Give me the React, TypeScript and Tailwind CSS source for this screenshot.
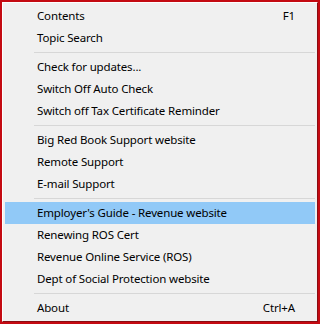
const groups: { label: string; shortcut?: string; active?: boolean }[][] = [
  [{ label: 'Contents', shortcut: 'F1' }, { label: 'Topic Search' }],
  [
    { label: 'Check for updates...' },
    { label: 'Switch Off Auto Check' },
    { label: 'Switch off Tax Certificate Reminder' },
  ],
  [
    { label: 'Big Red Book Support website' },
    { label: 'Remote Support' },
    { label: 'E-mail Support' },
  ],
  [
    { label: "Employer's Guide - Revenue website", active: true },
    { label: 'Renewing ROS Cert' },
    { label: 'Revenue Online Service (ROS)' },
    { label: 'Dept of Social Protection website' },
  ],
  [{ label: 'About', shortcut: 'Ctrl+A' }],
];

export default function App() {
  return (
    <div className="w-[320px] h-[324px] bg-[#c40a12] p-[2px]">
      <div className="h-full border-l border-t border-white border-r border-b border-r-[#8a0d12] border-b-[#8a0d12] bg-[#f0f0f0] px-[2px] pt-[2px] font-['Noto_Sans',sans-serif] text-[11.5px] tracking-[-0.15px] text-black">
        {groups.map((items, gi) => (
          <div key={gi}>
            {gi > 0 && (
              <div className="h-[7px] flex items-center pl-[29px]">
                <div className="h-px w-full bg-[#d7d7d7]" />
              </div>
            )}
            {items.map((it) => (
              <div
                key={it.label}
                className={`h-[22px] flex items-center pl-[32px] pr-[20px] ${
                  it.active ? 'bg-[#91c9f7]' : ''
                }`}
              >
                <span className="flex-1 leading-none">{it.label}</span>
                {it.shortcut && <span className="leading-none">{it.shortcut}</span>}
              </div>
            ))}
          </div>
        ))}
      </div>
    </div>
  );
}
